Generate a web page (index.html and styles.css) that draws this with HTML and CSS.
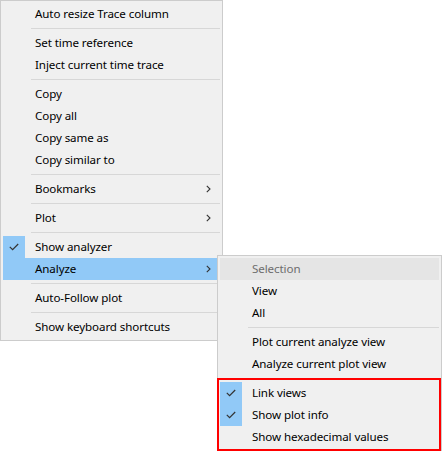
FILE: index.html
```html
<!DOCTYPE html>
<html>
<head>
<meta charset="utf-8">
<link rel="stylesheet" href="styles.css">
</head>
<body>
<div class="menu main">
  <div class="item"><span class="label">Auto resize Trace column</span></div>
  <div class="sep"></div>
  <div class="item"><span class="label">Set time reference</span></div>
  <div class="item"><span class="label">Inject current time trace</span></div>
  <div class="sep"></div>
  <div class="item"><span class="label">Copy</span></div>
  <div class="item"><span class="label">Copy all</span></div>
  <div class="item"><span class="label">Copy same as</span></div>
  <div class="item"><span class="label">Copy similar to</span></div>
  <div class="sep"></div>
  <div class="item"><span class="label">Bookmarks</span><svg class="arrow" width="5" height="8" viewBox="0 0 5 8"><path d="M0.8 0.8 L4 4 L0.8 7.2" fill="none" stroke="#333" stroke-width="1.1"/></svg></div>
  <div class="sep"></div>
  <div class="item"><span class="label">Plot</span><svg class="arrow" width="5" height="8" viewBox="0 0 5 8"><path d="M0.8 0.8 L4 4 L0.8 7.2" fill="none" stroke="#333" stroke-width="1.1"/></svg></div>
  <div class="sep"></div>
  <div class="item checked"><span class="check"><svg width="10" height="8" viewBox="0 0 10 8"><path d="M0.8 3.8 L3.6 6.6 L9.2 1" fill="none" stroke="#333" stroke-width="1.2"/></svg></span><span class="label">Show analyzer</span></div>
  <div class="item hot"><span class="label">Analyze</span><svg class="arrow" width="5" height="8" viewBox="0 0 5 8"><path d="M0.8 0.8 L4 4 L0.8 7.2" fill="none" stroke="#333" stroke-width="1.1"/></svg></div>
  <div class="sep"></div>
  <div class="item"><span class="label">Auto-Follow plot</span></div>
  <div class="sep"></div>
  <div class="item"><span class="label">Show keyboard shortcuts</span></div>
</div>

<div class="menu sub">
  <div class="item disabled focus"><span class="label">Selection</span></div>
  <div class="item"><span class="label">View</span></div>
  <div class="item"><span class="label">All</span></div>
  <div class="sep"></div>
  <div class="item"><span class="label">Plot current analyze view</span></div>
  <div class="item"><span class="label">Analyze current plot view</span></div>
  <div class="sep"></div>
  <div class="item checked"><span class="check"><svg width="10" height="8" viewBox="0 0 10 8"><path d="M0.8 3.8 L3.6 6.6 L9.2 1" fill="none" stroke="#333" stroke-width="1.2"/></svg></span><span class="label">Link views</span></div>
  <div class="item checked"><span class="check"><svg width="10" height="8" viewBox="0 0 10 8"><path d="M0.8 3.8 L3.6 6.6 L9.2 1" fill="none" stroke="#333" stroke-width="1.2"/></svg></span><span class="label">Show plot info</span></div>
  <div class="item"><span class="label">Show hexadecimal values</span></div>
</div>

<div class="highlight-box"></div>
</body>
</html>
```

FILE: styles.css
```css
html, body {
  margin: 0;
  padding: 0;
  background: #ffffff;
}

body {
  position: relative;
  width: 442px;
  height: 451px;
  overflow: hidden;
  font-family: "Noto Sans", "Open Sans", "Liberation Sans", sans-serif;
  font-size: 11.6px;
  letter-spacing: -0.1px;
  color: #000;
}

.menu {
  box-sizing: border-box;
  background: #f0f0f0;
  border: 1px solid #cccccc;
  padding: 2px;
  display: flex;
  flex-direction: column;
}

.main {
  width: 223px;
  height: 341px;
}

.sub {
  position: absolute;
  left: 217px;
  top: 255px;
  width: 225px;
  height: 197px;
}

.item {
  position: relative;
  height: 22px;
  display: flex;
  align-items: center;
  padding-left: 32px;
  padding-right: 8px;
  white-space: nowrap;
}

.label {
  flex: 1;
  line-height: 22px;
}

.item.hot {
  background: #91c9f7;
}

.item.focus {
  background: #e5e5e5;
}

.item.disabled {
  color: #6d6d6d;
}

.check {
  position: absolute;
  left: 0;
  top: 0;
  width: 22px;
  height: 22px;
  display: flex;
  align-items: center;
  justify-content: center;
  background: #91c9f7;
}

.arrow {
  display: block;
  margin-right: 1px;
}

.sep {
  height: 7px;
  margin-left: 28px;
  display: flex;
  align-items: center;
}

.sep::before {
  content: "";
  display: block;
  width: 100%;
  height: 1px;
  background: #d7d7d7;
}

.highlight-box {
  position: absolute;
  left: 217px;
  top: 378px;
  width: 224px;
  height: 73px;
  box-sizing: border-box;
  border: 2px solid #ff0000;
}
```
